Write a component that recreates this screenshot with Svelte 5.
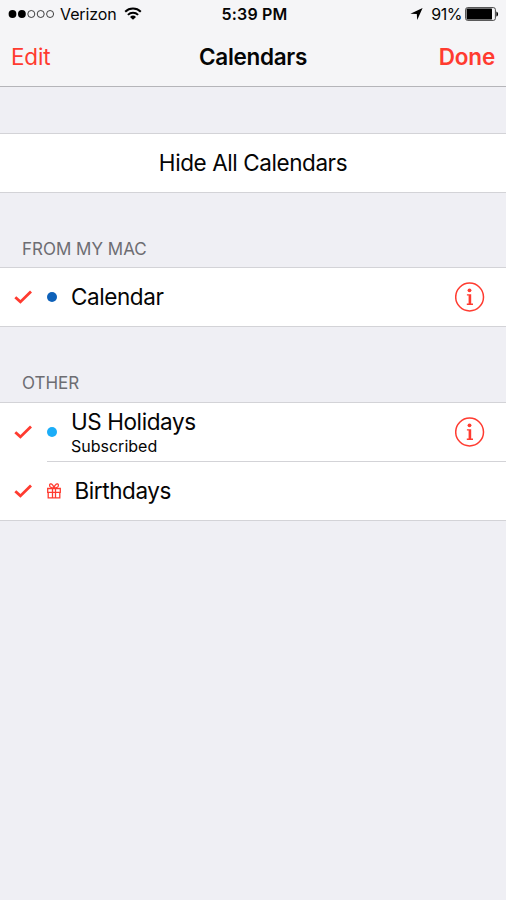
<script lang="ts">
    type Calendar = {
        name: string;
        note?: string;
        color?: string;
        gift?: boolean;
        info?: boolean;
    };

    type Group = { title: string; items: Calendar[] };

    const groups: Group[] = [
        {
            title: "FROM MY MAC",
            items: [{ name: "Calendar", color: "#0e61b9", info: true }],
        },
        {
            title: "OTHER",
            items: [
                { name: "US Holidays", note: "Subscribed", color: "#1badf8", info: true },
                { name: "Birthdays", gift: true },
            ],
        },
    ];

    // signal strength, out of five dots
    const signal = 2;
</script>

<div class="screen">
    <header>
        <div class="status">
            <div class="carrier">
                <svg class="dots" width="46" height="10" viewBox="0 0 46 10">
                    {#each [0, 1, 2, 3, 4] as i}
                        <circle
                            class:on={i < signal}
                            cx={4.5 + i * 9.4}
                            cy="5"
                            r={i < signal ? 3.9 : 3.5}
                        />
                    {/each}
                </svg>
                <span class="network">Verizon</span>
                <svg class="wifi" width="18" height="14" viewBox="0 0 18 14">
                    <path d="M1.2 4.7a11.2 11.2 0 0 1 15.6 0M3.9 7.9a7.2 7.2 0 0 1 10.2 0" />
                    <path class="solid" d="M9 12.7 6 9.9a4.5 4.5 0 0 1 6 0z" />
                </svg>
            </div>
            <span class="time">5:39 PM</span>
            <div class="power">
                <svg width="13" height="12" viewBox="0 0 13 12">
                    <path d="M12.6 0 7.2 12 6.8 6.1.4 5.8z" />
                </svg>
                <span class="percent">91%</span>
                <svg class="battery" width="34" height="14" viewBox="0 0 34 14">
                    <rect class="shell" x=".6" y=".6" width="29.8" height="12.8" rx="2" />
                    <rect x="1.6" y="1.6" width="25.4" height="10.8" rx=".6" />
                    <path d="M31.4 4.4c2.2.8 2.2 4.4 0 5.2z" />
                </svg>
            </div>
        </div>
        <nav>
            <span class="edit">Edit</span>
            <h1>Calendars</h1>
            <span class="done">Done</span>
        </nav>
    </header>

    <div class="list hide-all"><span class="name">Hide All Calendars</span></div>

    {#each groups as group}
        <section>
            <h2>{group.title}</h2>
            <ul class="list">
                {#each group.items as item}
                    <li>
                        <svg class="check" width="18" height="14" viewBox="0 0 18 14">
                            <path d="M1.3 7.2 6.4 11.9 17 1.4" />
                        </svg>
                        <div class="body">
                            {#if item.gift}
                                <svg class="gift" width="14" height="16" viewBox="0 0 14 16">
                                    <path d="M.7 5.5h12.6v3.8H.7zM1.2 9.3v5.5h11.6V9.3M5.5 5.5v9.3M8.5 5.5v9.3" />
                                    <path d="M7 5.4C4.6 5 2.2 4 2.6 2 3.2-.1 6.2.6 7 5.4 7.8.6 10.8-.1 11.4 2 11.8 4 9.4 5 7 5.4z" />
                                </svg>
                            {:else}
                                <span class="dot" style:background-color={item.color}></span>
                            {/if}
                            <div class="label">
                                <span class="name">{item.name}</span>
                                {#if item.note}
                                    <span class="note">{item.note}</span>
                                {/if}
                            </div>
                            {#if item.info}
                                <svg class="info" width="30" height="30" viewBox="0 0 30 30">
                                    <circle class="ring" cx="14.6" cy="15" r="13.9" />
                                    <circle cx="14.5" cy="8.3" r="1.9" />
                                    <path d="M11.9 12.2h4.3v9.4H18v1.3h-6.2v-1.3h1.8v-8.1h-1.7z" />
                                </svg>
                            {/if}
                        </div>
                    </li>
                {/each}
            </ul>
        </section>
    {/each}
</div>

<style>
    :global(body) {
        background: #efeff4;
    }

    .screen {
        min-height: 900px;
        background: #efeff4;
        color: #050505;
        font-family: Inter, "Liberation Sans", sans-serif;
        font-size: 22.5px;
        line-height: 28px;
        white-space: nowrap;
    }

    header {
        box-sizing: border-box;
        height: 87px;
        margin-bottom: 46px;
        background: #f5f5f7;
        border-bottom: 1px solid #b5b5b9;
    }

    .status,
    nav {
        display: grid;
        grid-template-columns: 1fr auto 1fr;
        align-items: center;
    }

    .status {
        height: 28px;
        padding: 0 7px 0 8px;
        font-size: 16px;
        line-height: 20px;
    }

    .carrier,
    .power {
        display: flex;
        align-items: center;
    }

    .power {
        justify-content: flex-end;
    }

    .dots circle {
        fill: none;
        stroke: #111;
        stroke-width: 0.8;
    }

    .dots .on {
        fill: #000;
        stroke: none;
    }

    .network {
        margin-left: 6px;
        letter-spacing: -0.1px;
    }

    .wifi {
        margin-left: 7px;
    }

    .wifi path {
        fill: none;
        stroke: #000;
        stroke-width: 2;
    }

    .wifi .solid {
        fill: #000;
        stroke: none;
    }

    .time {
        padding-left: 2px;
        font-weight: 600;
        letter-spacing: 0.2px;
    }

    .percent {
        margin: 0 3px 0 8px;
        letter-spacing: -0.5px;
    }

    .battery .shell {
        fill: none;
        stroke: #333;
        stroke-width: 0.9;
    }

    nav {
        height: 58px;
        padding: 0 11px;
    }

    h1 {
        margin: 0;
        font-size: 22.5px;
        font-weight: 600;
        letter-spacing: -0.3px;
    }

    .edit,
    .done {
        color: #ff3b30;
        letter-spacing: -0.2px;
    }

    .done {
        font-weight: 600;
        text-align: right;
    }

    .list {
        margin: 0;
        padding: 0;
        list-style: none;
        background: #fff;
        border: solid #d3d3d7;
        border-width: 1px 0;
    }

    .hide-all {
        height: 58px;
        line-height: 58px;
        text-align: center;
    }

    h2 {
        box-sizing: border-box;
        height: 74px;
        margin: 0;
        padding: 46px 22px 0;
        color: #6d6d72;
        font-size: 17px;
        font-weight: 400;
        line-height: 20px;
    }

    section + section h2 {
        height: 75px;
    }

    li {
        display: flex;
        align-items: center;
        height: 58px;
        padding-left: 14px;
    }

    li + li {
        height: 59px;
    }

    .check {
        flex: none;
        margin-right: 15px;
    }

    .check path {
        fill: none;
        stroke: #ff3b30;
        stroke-width: 2.8;
    }

    .body {
        display: flex;
        flex: 1;
        align-items: center;
        height: 100%;
        padding-right: 21px;
    }

    li + li .body {
        box-sizing: border-box;
        border-top: 1px solid #d3d3d7;
    }

    .dot {
        width: 10px;
        height: 10px;
        margin-right: 14px;
        border-radius: 50%;
    }

    .gift {
        margin-right: 13.5px;
    }

    .gift path {
        fill: none;
        stroke: #ff3b30;
        stroke-width: 1.3;
    }

    .label {
        display: flex;
        flex: 1;
        flex-direction: column;
    }

    .name {
        letter-spacing: -0.42px;
    }

    .note {
        font-size: 16px;
        line-height: 20px;
    }

    .info {
        fill: #ff3b30;
    }

    .info .ring {
        fill: none;
        stroke: #ff3b30;
        stroke-width: 1.5;
    }
</style>
